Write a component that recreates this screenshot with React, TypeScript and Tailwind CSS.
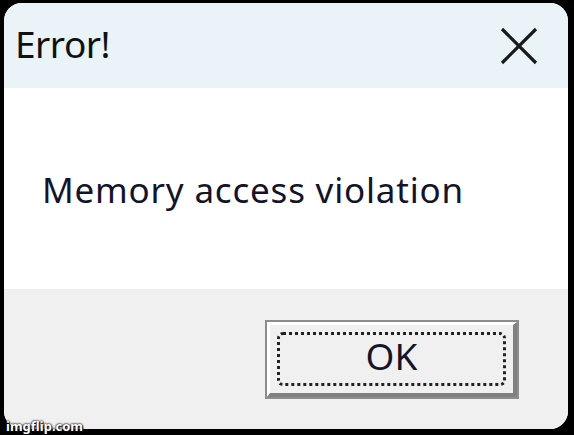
import React from "react";

export default function App() {
  return (
    <div
      className="w-[574px] h-[435px] bg-black pl-[4px] pt-[3px] pr-[6px] pb-[6px] relative"
      style={{ fontFamily: '"Noto Sans", "Open Sans", sans-serif' }}
    >
      <div className="w-full h-full rounded-[18px] overflow-hidden flex flex-col bg-white">
        <div className="h-[85px] bg-[#e9f3f8] flex items-start justify-between">
          <div className="pl-[11px] pt-[17px] text-[37px] leading-[48px] text-[#111] tracking-[-0.5px]">Error!</div>
          <div className="pr-[30px] pt-[24px]">
            <svg width="38" height="38" viewBox="0 0 38 38">
              <path d="M2 2 L36 36 M36 2 L2 36" stroke="#1a1a1a" strokeWidth="3.2" fill="none" />
            </svg>
          </div>
        </div>
        <div className="h-[201px] bg-white pl-[38px] pt-[80px]">
          <div className="text-[35px] leading-[44px] tracking-[0.8px] text-[#13132a]">Memory access violation</div>
        </div>
        <div className="flex-1 bg-[#f0f0f0] flex justify-end items-start pt-[31px] pr-[49px]">
          <div className="w-[254px] h-[79px] border-[2px] border-[#8d8d8d] bg-[#f0f0f0] flex">
            <div className="flex-1 border-t-[3px] border-l-[3px] border-t-[#ffffff] border-l-[#ffffff] border-r-[4px] border-b-[4px] border-r-[#808080] border-b-[#808080] p-[7px] flex">
              <div className="flex-1 rounded-[6px] border-[3px] border-dotted border-[#222] flex items-center justify-center">
                <span className="text-[37px] leading-none text-[#15152a] pb-[8px]">OK</span>
              </div>
            </div>
          </div>
        </div>
      </div>
      <div
        className="absolute left-[6px] bottom-[2px] text-[13px] font-bold text-white leading-none"
        style={{ textShadow: "0 0 2px #000, 0 0 2px #000, 1px 1px 1px #000" }}
      >
        imgflip.com
      </div>
    </div>
  );
}
